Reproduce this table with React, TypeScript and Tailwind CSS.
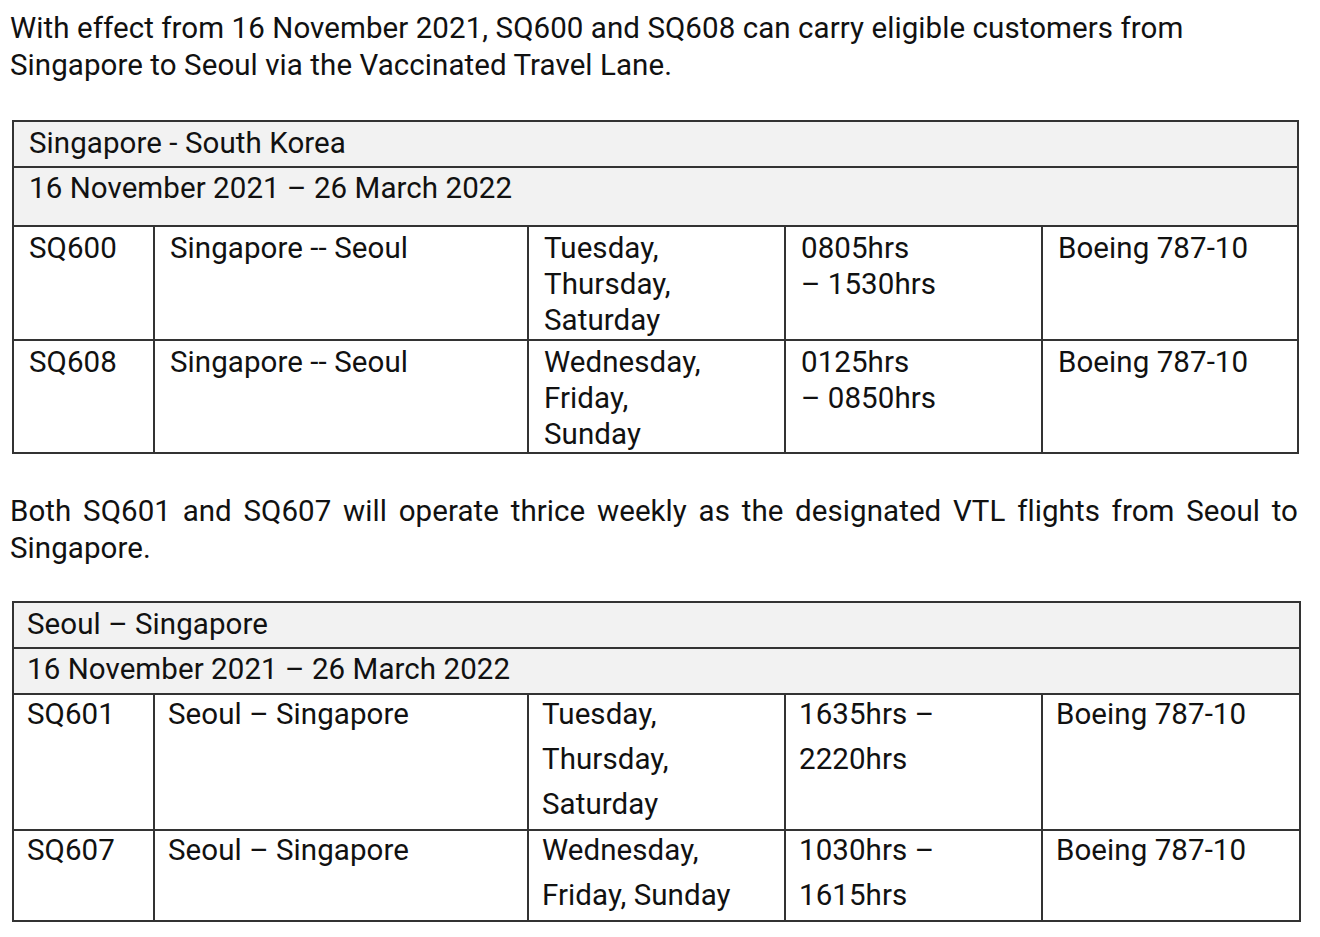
import React from "react";

interface Flight {
  code: string;
  route: string;
  days: string[];
  times: string[];
  aircraft: string;
}

const outbound: Flight[] = [
  { code: "SQ600", route: "Singapore -- Seoul", days: ["Tuesday,", "Thursday,", "Saturday"], times: ["0805hrs", "– 1530hrs"], aircraft: "Boeing 787-10" },
  { code: "SQ608", route: "Singapore -- Seoul", days: ["Wednesday,", "Friday,", "Sunday"], times: ["0125hrs", "– 0850hrs"], aircraft: "Boeing 787-10" },
];

const inbound: Flight[] = [
  { code: "SQ601", route: "Seoul – Singapore", days: ["Tuesday,", "Thursday,", "Saturday"], times: ["1635hrs –", "2220hrs"], aircraft: "Boeing 787-10" },
  { code: "SQ607", route: "Seoul – Singapore", days: ["Wednesday,", "Friday, Sunday"], times: ["1030hrs –", "1615hrs"], aircraft: "Boeing 787-10" },
];

const cell = "border-2 border-[#333] align-top";

const Lines = ({ items }: { items: string[] }) => (
  <>
    {items.map((l) => (
      <div key={l}>{l}</div>
    ))}
  </>
);

const ScheduleTable = ({
  title,
  period,
  flights,
  periodHeight,
  rowHeights,
  lineClass,
  pad,
}: {
  title: string;
  period: string;
  flights: Flight[];
  periodHeight: string;
  rowHeights: string[];
  lineClass: string;
  pad: string;
}) => (
  <table className="w-full border-collapse table-fixed">
    <colgroup>
      <col className="w-[141px]" />
      <col className="w-[374px]" />
      <col className="w-[257px]" />
      <col className="w-[257px]" />
      <col />
    </colgroup>
    <tbody>
      <tr className="h-[46px] bg-[#f2f2f2]">
        <td colSpan={5} className={`${cell} ${pad} pt-[3px] leading-[36px]`}>
          {title}
        </td>
      </tr>
      <tr className={`${periodHeight} bg-[#f2f2f2]`}>
        <td colSpan={5} className={`${cell} ${pad} pt-[2px] leading-[36px]`}>
          {period}
        </td>
      </tr>
      {flights.map((f, i) => (
        <tr key={f.code} className={rowHeights[i]}>
          <td className={`${cell} ${pad}`}>
            <div className={lineClass}>{f.code}</div>
          </td>
          <td className={`${cell} ${pad}`}>
            <div className={lineClass}>{f.route}</div>
          </td>
          <td className={`${cell} ${pad}`}>
            <div className={lineClass}>
              <Lines items={f.days} />
            </div>
          </td>
          <td className={`${cell} ${pad}`}>
            <div className={lineClass}>
              <Lines items={f.times} />
            </div>
          </td>
          <td className={`${cell} ${pad}`}>
            <div className={lineClass}>{f.aircraft}</div>
          </td>
        </tr>
      ))}
    </tbody>
  </table>
);

export default function App() {
  return (
    <div className="w-[1320px] h-[937px] bg-white text-[#111] text-[29.5px] tracking-[0.07px] font-['Roboto',sans-serif] overflow-hidden">
      <div className="pl-[10px] pt-[10px] leading-[37px] whitespace-nowrap">
        <p>
          With effect from 16 November 2021, SQ600 and SQ608 can carry eligible customers from
          <br />
          Singapore to Seoul via the Vaccinated Travel Lane.
        </p>
      </div>

      <div className="pl-[12px] pr-[21px] pt-[36px]">
        <ScheduleTable
          title="Singapore - South Korea"
          period="16 November 2021  – 26 March 2022"
          flights={outbound}
          periodHeight="h-[59px]"
          rowHeights={["h-[114px]", "h-[112px]"]}
          lineClass="leading-[36px] mt-[3px]"
          pad="pl-[15px] pr-[6px]"
        />
      </div>

      <div className="pl-[10px] pr-[22px] pt-[39px] leading-[37px]">
        <p className="text-justify">
          Both SQ601 and SQ607 will operate thrice weekly as the designated VTL flights from Seoul to Singapore.
        </p>
      </div>

      <div className="pl-[12px] pr-[19px] pt-[34px]">
        <ScheduleTable
          title="Seoul – Singapore"
          period="16 November 2021  – 26 March 2022"
          flights={inbound}
          periodHeight="h-[46px]"
          rowHeights={["h-[136px]", "h-[91px]"]}
          lineClass="leading-[45px] -mt-[3px]"
          pad="pl-[13px] pr-[6px]"
        />
      </div>
    </div>
  );
}
